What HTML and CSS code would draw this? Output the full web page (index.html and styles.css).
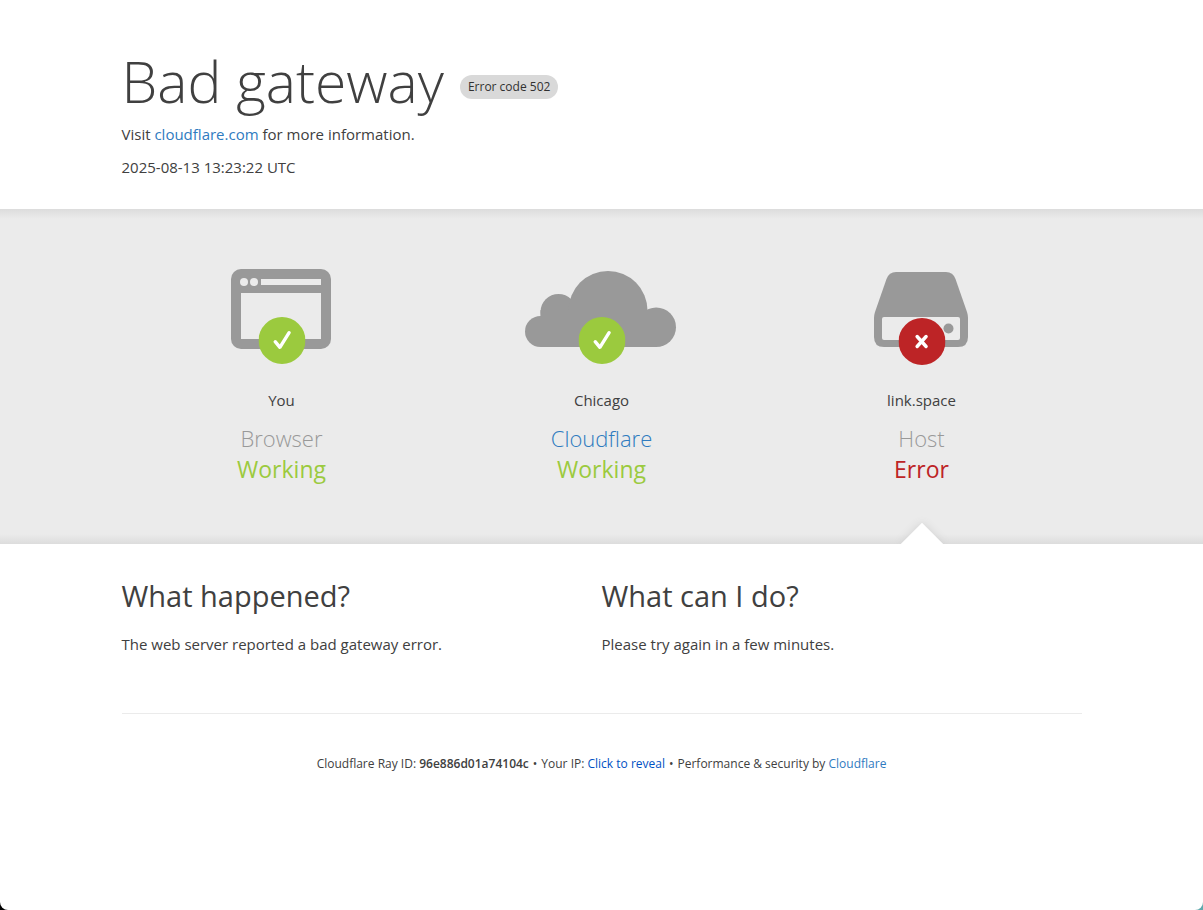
FILE: index.html
```
<!DOCTYPE html>
<html lang="en">
<head>
  <meta charset="UTF-8" />
  <meta name="viewport" content="width=device-width, initial-scale=1.0" />
  <title>link.space | 502: Bad gateway</title>
  <link rel="stylesheet" href="styles.css">
</head>
<body>
  <div class="page">
    <header class="header wrapper">
      <div class="title-row">
        <h1>Bad gateway</h1>
        <span class="code-label">Error code 502</span>
      </div>
      <p>Visit <a href="#">cloudflare.com</a> for more information.</p>
      <p>2025-08-13 13:23:22 UTC</p>
    </header>

    <main>
      <section class="status">
        <div class="wrapper status-row">
          <div class="status-item">
            <div class="icon">
              <svg width="101" height="80" viewBox="0 0 101 80" aria-hidden="true">
                <rect width="100" height="80" rx="10" fill="#999" />
                <circle cx="13" cy="13" r="4" fill="#ebebeb" />
                <circle cx="23" cy="13" r="4" fill="#ebebeb" />
                <path d="M30 10h60v6H30zM10 24h80v46H10z" fill="#ebebeb" />
              </svg>
              <svg class="badge" viewBox="0 0 47 47" aria-hidden="true">
                <circle cx="23.5" cy="23.5" r="23.5" fill="#9bca3e" />
                <path d="M16.7 24.7l4.7 5.6 9.2-14.6" fill="none" stroke="#fff" stroke-width="3.4" stroke-linecap="round" stroke-linejoin="round" />
              </svg>
            </div>
            <span class="location">You</span>
            <h3>Browser</h3>
            <span class="state ok">Working</span>
          </div>

          <div class="status-item">
            <div class="icon">
              <svg width="153" height="76" viewBox="0 0 153 76" aria-hidden="true">
                <g fill="#999">
                  <circle cx="15.5" cy="60.500" r="15.5" />
                  <circle cx="33.500" cy="41" r="18" />
                  <circle cx="83" cy="39.500" r="39.500" />
                  <circle cx="131.200" cy="56.200" r="19.8" />
                  <path d="M15.500 39H131v37H15.500z" />
                </g>
              </svg>
              <svg class="badge" viewBox="0 0 47 47" aria-hidden="true">
                <circle cx="23.5" cy="23.5" r="23.5" fill="#9bca3e" />
                <path d="M16.7 24.7l4.7 5.6 9.2-14.6" fill="none" stroke="#fff" stroke-width="3.4" stroke-linecap="round" stroke-linejoin="round" />
              </svg>
            </div>
            <span class="location">Chicago</span>
            <h3><a href="#">Cloudflare</a></h3>
            <span class="state ok">Working</span>
          </div>

          <div class="status-item is-error">
            <div class="icon">
              <svg width="95" height="78" viewBox="0 -2 95 78" aria-hidden="true">
                <path d="M22 0h50q7 0 9.5 7L93 40q1 3 1 6v19q0 10-10 10H10Q0 75 0 65V46q0-3 1-6L12.5 7Q15 0 22 0z" fill="#999" />
                <rect x="8" y="45" width="78" height="23" rx="2" fill="#ebebeb" />
                <circle cx="74.5" cy="56.5" r="5" fill="#999" />
              </svg>
              <svg class="badge" viewBox="0 0 47 47" aria-hidden="true">
                <circle cx="23.5" cy="23.5" r="23.5" fill="#bd2426" />
                <path d="M18.6 18.5l9 10M27.6 18.5l-9 10" fill="none" stroke="#fff" stroke-width="3.4" stroke-linecap="round" />
              </svg>
            </div>
            <span class="location">link.space</span>
            <h3>Host</h3>
            <span class="state error">Error</span>
          </div>
        </div>
      </section>

      <section class="wrapper details">
        <div>
          <h2>What happened?</h2>
          <p>The web server reported a bad gateway error.</p>
        </div>
        <div>
          <h2>What can I do?</h2>
          <p>Please try again in a few minutes.</p>
        </div>
      </section>
    </main>

    <footer class="wrapper footer">
      <span>Cloudflare Ray ID: <strong>96e886d01a74104c</strong></span>
      <span>&bull;</span>
      <span>Your IP: <button type="button">Click to reveal</button></span>
      <span>&bull;</span>
      <span>Performance &amp; security by <a href="#">Cloudflare</a></span>
    </footer>
  </div>
</body>
</html>
```
FILE: styles.css
```
* {
  box-sizing: border-box;
}
html {
  background: linear-gradient(to right, #000 50%, #5fa9ad 50%);
}
body {
  margin: 0;
  font-family: "Segoe UI", "Open Sans", "Noto Sans", sans-serif;
  font-size: 15px;
  line-height: 24px;
  color: #404040;
}
h1, h2, h3, p {
  margin: 0;
}
a {
  color: #2f7bbf;
  text-decoration: none;
}
.page {
  min-height: 100vh;
  background: #fff;
  border-radius: 0 0 8px 8px;
}
.wrapper {
  width: 80%;
  max-width: 960px;
  margin: 0 auto;
}

.header {
  padding: 51px 0 30px;
}
.header p + p {
  margin-top: 9px;
}
.title-row {
  display: flex;
  flex-wrap: wrap;
  align-items: center;
  gap: 16px;
  margin-bottom: 11px;
}
h1 {
  font-size: 57px;
  font-weight: 300;
  line-height: 60px;
}
.code-label {
  margin-top: 12px;
  padding: 0 8px;
  border-radius: 12px;
  background: #d9d9d9;
  font-size: 12px;
  font-weight: 500;
  color: #313131;
}

.status {
  overflow: hidden;
  background:
    linear-gradient(to bottom, #dcdcdc, rgba(235, 235, 235, 0) 10px),
    linear-gradient(to top, #dcdcdc, rgba(235, 235, 235, 0) 10px),
    #ebebeb;
}
.status-row {
  display: grid;
  grid-template-columns: repeat(3, 1fr);
}
.status-item {
  position: relative;
  display: flex;
  flex-direction: column;
  align-items: center;
  padding: 60px 0 59px;
}
.icon {
  position: relative;
  display: flex;
  align-items: center;
  height: 80px;
  margin-bottom: 39px;
}
.badge {
  position: absolute;
  left: 50%;
  bottom: -15px;
  width: 47px;
  height: 47px;
  transform: translateX(-50%);
}
.is-error .badge {
  bottom: -16px;
}
.location {
  margin-bottom: 11px;
}
h3,
.state {
  font-size: 22px;
  font-weight: 300;
  line-height: 31px;
}
h3 {
  color: #999;
}
.state {
  font-size: 23px;
  font-weight: 400;
}
.ok {
  color: #9bca3e;
}
.error {
  color: #bd2426;
}
/* pointer under the failing column, lower half is cut off by .status */
.is-error::after {
  content: "";
  position: absolute;
  bottom: -15px;
  left: 50%;
  width: 30px;
  height: 30px;
  transform: translateX(-50%) rotate(45deg);
  background: #fff;
  box-shadow: 0 0 8px #d0d0d0;
}

.details {
  display: grid;
  grid-template-columns: 1fr 1fr;
  padding: 32px 0 57px;
  border-bottom: 1px solid #ebebeb;
}
h2 {
  margin-bottom: 16px;
  font-size: 29px;
  font-weight: 400;
  line-height: 40px;
}

.footer {
  display: flex;
  flex-wrap: wrap;
  justify-content: center;
  gap: 4px;
  padding: 38px 0;
  font-size: 12px;
}
.footer strong {
  font-weight: 600;
}
.footer button {
  padding: 0;
  border: 0;
  background: none;
  font: inherit;
  color: #0051c3;
  cursor: pointer;
}
```
